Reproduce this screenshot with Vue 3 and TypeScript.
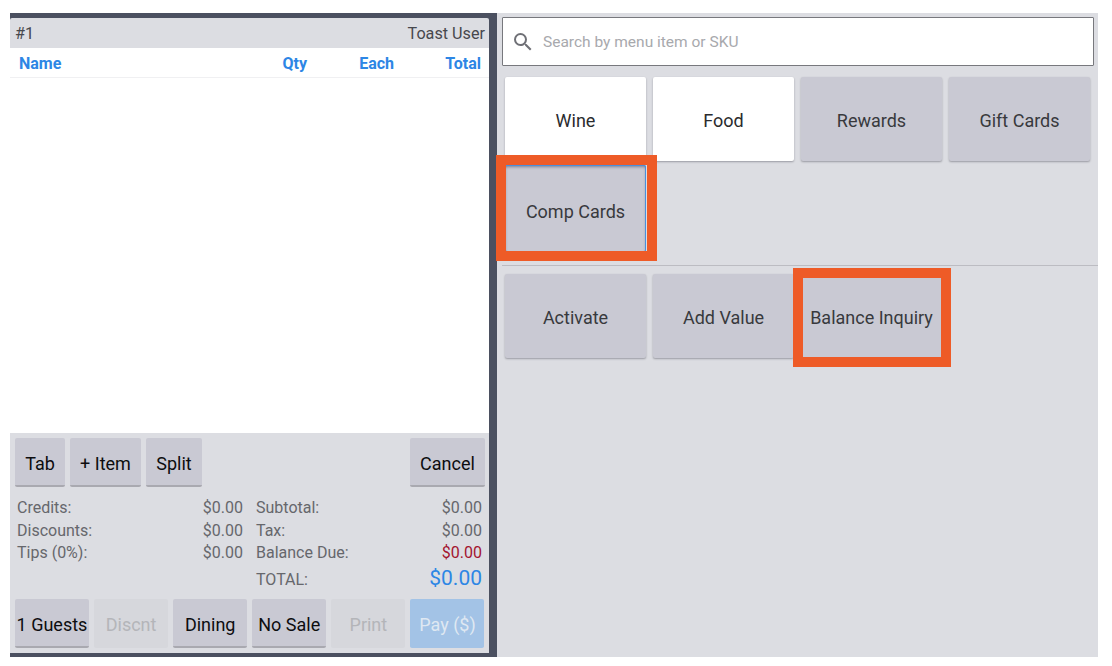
<script setup lang="ts">
interface Btn {
  label: string;
  kind?: 'off' | 'pay';
}

interface Tile {
  label: string;
  white?: boolean;
  marked?: 'group' | 'item';
}

const columns = ['Qty', 'Each', 'Total'];

const actions: Btn[] = [{ label: 'Tab' }, { label: '+ Item' }, { label: 'Split' }];

const bottomButtons: Btn[] = [
  { label: '1 Guests' },
  { label: 'Discnt', kind: 'off' },
  { label: 'Dining' },
  { label: 'No Sale' },
  { label: 'Print', kind: 'off' },
  { label: 'Pay ($)', kind: 'pay' },
];

const leftTotals = [
  { label: 'Credits:', value: '$0.00' },
  { label: 'Discounts:', value: '$0.00' },
  { label: 'Tips (0%):', value: '$0.00' },
];

const groups: Tile[] = [
  { label: 'Wine', white: true },
  { label: 'Food', white: true },
  { label: 'Rewards' },
  { label: 'Gift Cards' },
  { label: 'Comp Cards', marked: 'group' },
];

const items: Tile[] = [
  { label: 'Activate' },
  { label: 'Add Value' },
  { label: 'Balance Inquiry', marked: 'item' },
];
</script>

<template>
  <div class="page">
    <div class="frame">
      <section class="check">
        <header class="check-head">
          <span>#1</span>
          <span>Toast User</span>
        </header>
        <div class="columns">
          <span class="col-name">Name</span>
          <span v-for="c in columns" :key="c" class="col" :class="'col-' + c.toLowerCase()">{{ c }}</span>
        </div>
        <div class="lines"></div>
        <footer class="check-foot">
          <div class="actions">
            <button v-for="b in actions" :key="b.label" class="btn" type="button">{{ b.label }}</button>
            <button class="btn cancel" type="button">Cancel</button>
          </div>
          <div class="totals">
            <div class="totals-col left">
              <div v-for="t in leftTotals" :key="t.label" class="row">
                <span>{{ t.label }}</span>
                <span>{{ t.value }}</span>
              </div>
            </div>
            <div class="totals-col right">
              <div class="row"><span>Subtotal:</span><span>$0.00</span></div>
              <div class="row"><span>Tax:</span><span>$0.00</span></div>
              <div class="row"><span>Balance Due:</span><span class="due">$0.00</span></div>
              <div class="row total"><span>TOTAL:</span><span class="grand">$0.00</span></div>
            </div>
          </div>
          <div class="bottom">
            <button
              v-for="b in bottomButtons"
              :key="b.label"
              class="btn"
              :class="b.kind"
              type="button"
            >{{ b.label }}</button>
          </div>
        </footer>
      </section>

      <section class="menu">
        <div class="search">
          <svg class="search-icon" width="24" height="24" viewBox="0 0 24 24" aria-hidden="true">
            <path
              fill="#6f7076"
              d="M15.5 14h-.79l-.28-.27A6.47 6.47 0 0 0 16 9.5 6.5 6.5 0 1 0 9.5 16c1.61 0 3.09-.59 4.23-1.57l.27.28v.79l5 4.99L20.49 19l-4.99-5zm-6 0C7.01 14 5 11.99 5 9.5S7.01 5 9.5 5 14 7.01 14 9.5 11.99 14 9.5 14z"
            />
          </svg>
          <span class="placeholder">Search by menu item or SKU</span>
        </div>
        <div class="tiles groups">
          <div
            v-for="t in groups"
            :key="t.label"
            class="tile"
            :class="{ white: t.white, selected: t.marked === 'group' }"
          >
            {{ t.label }}
            <span v-if="t.marked" class="mark" :class="t.marked"></span>
          </div>
        </div>
        <div class="tiles items">
          <div v-for="t in items" :key="t.label" class="tile">
            {{ t.label }}
            <span v-if="t.marked" class="mark" :class="t.marked"></span>
          </div>
        </div>
      </section>
    </div>
  </div>
</template>

<style>
html,
body {
  margin: 0;
  background: #fff;
}
</style>

<style scoped>
.page {
  width: 1112px;
  height: 666px;
  padding: 13px 14px 9px 10px;
  box-sizing: border-box;
  font-family: Roboto, "Liberation Sans", sans-serif;
  overflow: hidden;
}
.frame {
  display: flex;
  height: 644px;
  background: #dcdde2;
}

/* left: the open check */
.check {
  width: 487px;
  box-sizing: border-box;
  display: flex;
  flex-direction: column;
  background: #4b5060;
  padding: 5px 8px 4px 0;
}
.check-head {
  flex: none;
  height: 30px;
  padding: 0 4px 0 5px;
  display: flex;
  align-items: center;
  justify-content: space-between;
  background: #dcdde2;
  border-radius: 2px 2px 0 0;
  color: #47484d;
  font-size: 16.2px;
}
.columns {
  flex: none;
  height: 30px;
  box-sizing: border-box;
  padding-top: 2px;
  padding-left: 9px;
  display: flex;
  align-items: center;
  background: #fff;
  border-bottom: 1px solid #f0f0f2;
  color: #2d86e5;
  font-size: 16px;
  font-weight: 700;
}
.col-name {
  flex: 1;
}
.col {
  text-align: right;
}
.col-qty {
  width: 36px;
}
.col-each {
  width: 87px;
}
.col-total {
  width: 87px;
  padding-right: 8px;
}
.lines {
  flex: 1;
  background: #fff;
}
.check-foot {
  flex: none;
  height: 220px;
  box-sizing: border-box;
  padding: 5px 4px 5px 5px;
  display: flex;
  flex-direction: column;
  background: #dcdde2;
}
.actions {
  display: flex;
  gap: 5px;
}
.btn {
  height: 49px;
  padding: 3px 0 0;
  border: 0;
  border-bottom: 2px solid #a9a9b0;
  border-radius: 2px;
  background: #c9c9d3;
  color: #0d0d0f;
  font: 400 18px Roboto, "Liberation Sans", sans-serif;
  white-space: nowrap;
}
.actions .btn {
  width: 50px;
}
.actions .btn:nth-child(2) {
  width: 71px;
}
.actions .btn:nth-child(3) {
  width: 56px;
}
.actions .cancel {
  width: 75px;
  margin-left: auto;
}
.totals {
  display: flex;
  height: 112px;
  padding: 10px 3px 0 2px;
  box-sizing: border-box;
  color: #66676c;
  font-size: 16px;
}
.totals-col.left {
  width: 226px;
}
.totals-col.right {
  flex: 1;
  margin-left: 13px;
}
.row {
  display: flex;
  justify-content: space-between;
  height: 22.5px;
  line-height: 22.5px;
}
.row.total {
  height: 30px;
  line-height: 30px;
  margin-top: -2px;
  align-items: baseline;
}
.due {
  color: #a3142f;
}
.grand {
  color: #2d86e5;
  font-size: 21px;
}
.bottom {
  display: grid;
  grid-template-columns: repeat(6, 74px);
  column-gap: 5.1px;
  margin-top: auto;
}
.btn.off {
  background: #d6d7dc;
  border-bottom-color: #d6d7dc;
  color: #b4b5b9;
}
.btn.pay {
  background: #a3c3e6;
  border-bottom-color: #a3c3e6;
  color: #dfe8f2;
}

/* right: search + menu tiles */
.menu {
  flex: 1;
  min-width: 0;
  padding: 4px 4px 0 5px;
}
.search {
  height: 49px;
  width: 592px;
  box-sizing: border-box;
  display: flex;
  align-items: center;
  gap: 8px;
  padding-left: 8px;
  background: #fff;
  border: 1px solid #77787d;
  border-radius: 1px;
}
.search-icon {
  flex: none;
}
.placeholder {
  color: #a8a9ad;
  font-size: 15.5px;
  padding-top: 1px;
}
.tiles {
  display: grid;
  grid-template-columns: repeat(4, 141px);
  grid-auto-rows: 84px;
  gap: 7px;
  padding-left: 3px;
}
.groups {
  margin-top: 11px;
  height: 188px;
  align-content: start;
  border-bottom: 1px solid #bcbcc2;
  margin-right: -4px;
}
.items {
  margin-top: 8px;
}
.tile {
  position: relative;
  display: flex;
  align-items: center;
  justify-content: center;
  padding-top: 2px;
  border-radius: 2px;
  background: #c9c9d3;
  color: #38393d;
  font-size: 18px;
  box-shadow: 0 1px 2px rgba(70, 70, 85, 0.45);
}
.tile.white {
  background: #fff;
  color: #2a2b2e;
}
.tile.selected {
  margin-top: -3px;
  padding-top: 5px;
  box-shadow: inset 0 0 0 1px #4a8fdc, inset 0 2px 3px rgba(60, 60, 80, 0.5);
}

/* orange callouts drawn over the tiles */
.mark {
  position: absolute;
  box-sizing: border-box;
  border: 10px solid #ee5b27;
  pointer-events: none;
}
.mark.group {
  left: -9px;
  top: -10px;
  width: 161px;
  height: 106px;
}
.mark.item {
  left: -8px;
  top: -6px;
  width: 158px;
  height: 99px;
}
</style>
